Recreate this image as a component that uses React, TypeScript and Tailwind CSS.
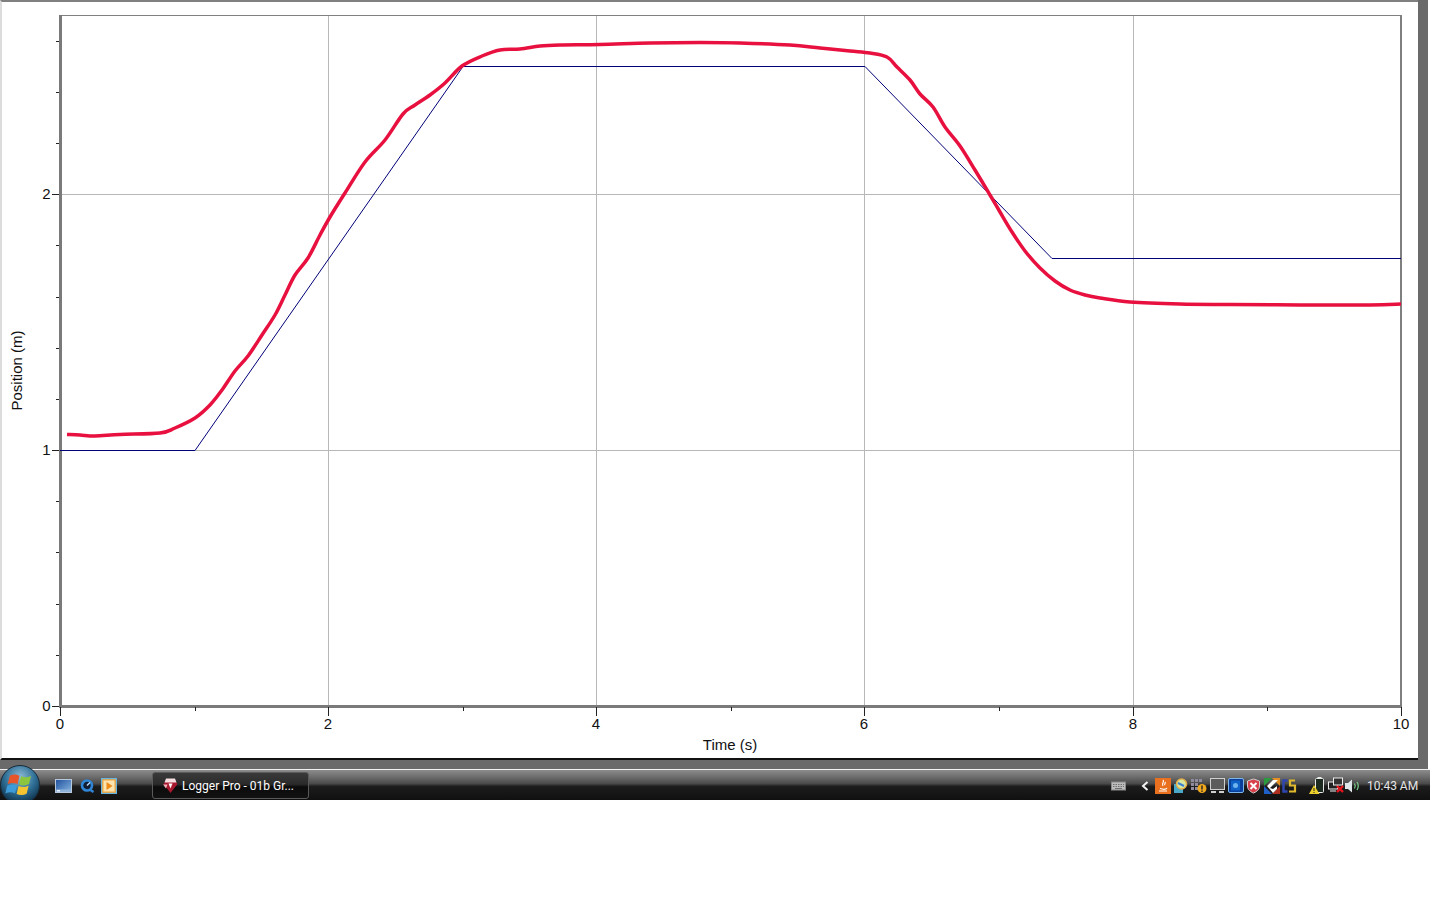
const redPts: [number, number][] = [[67,434.5],[80,435],[95,436],[120,434.5],[160,433],[175,428],[195,418],[210,405],[222,390],[235,371],[248,356],[262,335],[275,315],[285,295],[295,275],[308,258],[320,235],[330,217],[345,193],[365,162],[385,140],[403,114],[415,105],[430,95],[445,83],[462,66],[482,56],[500,50],[520,49],[540,46],[560,45],[600,44.5],[650,43],[700,42.5],[740,43],[790,45],[820,48],[850,51],[870,53],[887,57],[897,67],[910,80],[920,94],[933,107],[945,127],[960,146],[975,170],[990,195],[1000,212],[1012,232],[1025,251],[1040,268],[1055,281],[1070,290],[1085,295],[1100,298],[1130,302],[1180,304],[1230,304.5],[1300,305],[1370,305],[1401,304]];

function smooth(p: [number, number][]) {
  let d = `M${p[0][0]} ${p[0][1]}`;
  for (let i = 0; i < p.length - 1; i++) {
    const a = p[Math.max(i - 1, 0)];
    const b = p[i];
    const c = p[i + 1];
    const e = p[Math.min(i + 2, p.length - 1)];
    d += `C${b[0] + (c[0] - a[0]) / 6} ${b[1] + (c[1] - a[1]) / 6} ${c[0] - (e[0] - b[0]) / 6} ${c[1] - (e[1] - b[1]) / 6} ${c[0]} ${c[1]}`;
  }
  return d;
}

const blue = "60,450.5 195,450.5 463,66.5 865,66.5 1052,258.5 1401,258.5";

const xMajor = [
  { x: 60, l: "0" },
  { x: 328, l: "2" },
  { x: 596, l: "4" },
  { x: 864, l: "6" },
  { x: 1133, l: "8" },
  { x: 1401, l: "10" },
];
const xMinor = [195, 463, 731, 999, 1267];
const yMajor = [
  { y: 706, l: "0" },
  { y: 450, l: "1" },
  { y: 194, l: "2" },
];
const yMinor = [655, 604, 552, 501, 399, 348, 297, 245, 143, 92, 41];

function Chart() {
  return (
    <svg width="1416" height="756" viewBox="2 2 1416 756" className="block" style={{ fontFamily: '"Liberation Sans", Arial, sans-serif' }}>
      <g shapeRendering="crispEdges">
        {xMajor.slice(1, 5).map((t) => (
          <line key={t.x} x1={t.x + 0.5} x2={t.x + 0.5} y1="15" y2="706" stroke="#b8b8b8" />
        ))}
        {yMajor.slice(1).map((t) => (
          <line key={t.y} x1="60" x2="1401" y1={t.y + 0.5} y2={t.y + 0.5} stroke="#b8b8b8" />
        ))}
        <line x1="60" x2="1402" y1="15.5" y2="15.5" stroke="#808080" />
        <line x1="1401" x2="1401" y1="15" y2="707" stroke="#808080" strokeWidth="2" />
        <line x1="60" x2="60" y1="15" y2="708" stroke="#7a7a7a" strokeWidth="3" />
        <line x1="60" x2="1402" y1="706" y2="706" stroke="#7a7a7a" strokeWidth="3" />
        {xMajor.map((t) => (
          <line key={t.x} x1={t.x + 0.5} x2={t.x + 0.5} y1="707" y2="716" stroke="#222" />
        ))}
        {xMinor.map((x) => (
          <line key={x} x1={x + 0.5} x2={x + 0.5} y1="707" y2="711" stroke="#222" />
        ))}
        {yMajor.map((t) => (
          <line key={t.y} x1="52" x2="59" y1={t.y + 0.5} y2={t.y + 0.5} stroke="#222" />
        ))}
        {yMinor.map((y) => (
          <line key={y} x1="56" x2="59" y1={y + 0.5} y2={y + 0.5} stroke="#222" />
        ))}
      </g>
      <polyline points={blue} fill="none" stroke="#000078" strokeWidth="1" />
      <path d={smooth(redPts)} fill="none" stroke="#e8103f" strokeWidth="3.5" strokeLinejoin="round" />
      {xMajor.map((t) => (
        <text key={t.x} x={t.x} y="729" textAnchor="middle" fontSize="15" fill="#111">{t.l}</text>
      ))}
      {yMajor.map((t) => (
        <text key={t.y} x="50.5" y={t.y + 5} textAnchor="end" fontSize="15" fill="#111">{t.l}</text>
      ))}
      <text x="730" y="750" textAnchor="middle" fontSize="15" fill="#111">Time (s)</text>
      <text transform="translate(21.500 370.500) rotate(-90)" textAnchor="middle" fontSize="15" fill="#111">Position (m)</text>
    </svg>
  );
}

function StartOrb() {
  return (
    <svg width="42" height="36" viewBox="0 0 42 36" className="-mt-[6px] block shrink-0 self-end">
      <defs>
        <radialGradient id="orb" cx="50%" cy="30%" r="70%">
          <stop offset="0" stopColor="#8fbcd6" />
          <stop offset="0.55" stopColor="#2f6f96" />
          <stop offset="1" stopColor="#0c2c44" />
        </radialGradient>
      </defs>
      <circle cx="20" cy="21" r="19.500" fill="url(#orb)" stroke="#1a2a36" strokeWidth="1" />
      <path d="M10 11.500c3.500-1.500 6-1.500 9.500.2l-2 8.300c-3.500-1.500-6.200-1.500-9.800 0z" fill="#e8552a" />
      <path d="M21 12.200c3.500 1.500 6.200 1.500 10-.3l-2 8.200c-3.500 1.700-6.300 1.700-10 .3z" fill="#8cc63f" />
      <path d="M7.300 21.500c3.500-1.500 6.200-1.500 9.800 0l-2 7.800c-3.500-1.400-6.300-1.400-9.800.2z" fill="#3d9bd9" />
      <path d="M18.600 22c3.500 1.400 6.300 1.400 10-.3l-2 8c-3.500 1.600-6.300 1.600-10 .3z" fill="#f7c431" />
    </svg>
  );
}

function Quick() {
  return (
    <div className="ml-[13px] flex items-center pt-[1px]">
      <svg width="17" height="14" viewBox="0 0 17 14" className="block">
        <defs>
          <linearGradient id="desk" x1="0" y1="0" x2="1" y2="1">
            <stop offset="0" stopColor="#1d4f9c" />
            <stop offset="1" stopColor="#8ab8e4" />
          </linearGradient>
        </defs>
        <rect x="0.500" y="0.500" width="16" height="13" fill="url(#desk)" stroke="#b9c9dc" />
        <rect x="1" y="10.500" width="15" height="2.500" fill="#8fb3d8" />
        <rect x="2" y="11" width="3" height="1.500" fill="#eef" />
      </svg>
      <svg width="15" height="16" viewBox="0 0 15 16" className="ml-[8px] block">
        <circle cx="7" cy="7.500" r="5" fill="#111d33" stroke="#2f86d6" strokeWidth="2.600" />
        <path d="M7 7.500l3-3" stroke="#bfe0ff" strokeWidth="1.400" />
        <path d="M10.500 12l3 2" stroke="#2f86d6" strokeWidth="2.400" />
      </svg>
      <svg width="16" height="16" viewBox="0 0 16 16" className="ml-[6px] block">
        <rect x="0.500" y="0.500" width="15" height="15" fill="#f2a63a" stroke="#67b4e0" strokeWidth="1.400" />
        <rect x="2.500" y="2.500" width="11" height="11" fill="#fbe4b0" />
        <path d="M5.500 4l6 4-6 4z" fill="#ef8a17" />
      </svg>
    </div>
  );
}

function TaskButton() {
  return (
    <div className="ml-[35px] mt-[1px] flex h-[27px] w-[157px] items-center rounded-[3px] border border-[#5a5a5a] bg-[linear-gradient(#3a3a3a,#2a2a2a_45%,#0c0c0c_55%,#111)] pl-[9px]">
      <svg width="17" height="17" viewBox="0 0 17 17" className="block shrink-0">
        <path d="M1.500 7l7 9 7-9-2-2.500h-10z" fill="#a8182e" />
        <path d="M1 7.500c1 1 1.500 2 3 4l1.500-4z" fill="#f0b0b8" />
        <path d="M4 1.500h9l1.500 4h-12z" fill="#f6e0e2" />
        <path d="M6.500 6.500h4l-2 5z" fill="#fff" />
      </svg>
      <span className="ml-[3px] whitespace-nowrap text-[12px] leading-none text-white" style={{ fontFamily: 'Roboto, "Noto Sans", sans-serif' }}>
        Logger Pro - 01b Gr...
      </span>
    </div>
  );
}

function Tray() {
  return (
    <div className="ml-auto flex items-center pt-[1px]">
      <svg width="16" height="10" viewBox="0 0 16 10" className="mt-[1px] block">
        <rect x="0.500" y="1" width="14" height="8" fill="#bcbcbc" stroke="#8a8a8a" />
        <path d="M2 3.500h11M2 5.500h11" stroke="#6e6e6e" strokeDasharray="1.500 1" />
        <path d="M4 7.500h7" stroke="#6e6e6e" />
      </svg>
      <svg width="8" height="10" viewBox="0 0 8 10" className="ml-[14px] block">
        <path d="M6.500 1L2 5l4.500 4" fill="none" stroke="#f2f2f2" strokeWidth="2" />
      </svg>
      <svg width="16" height="16" viewBox="0 0 16 16" className="ml-[6px] block">
        <rect width="16" height="16" fill="#e8701f" />
        <path d="M5 10.500c3 1 6 1 7-.5M4 13h8" stroke="#fff" strokeWidth="1.200" fill="none" />
        <path d="M8 2c2 2-2 3 0 6M10 4c1 1-1 2 0 3" stroke="#fff" strokeWidth="1.200" fill="none" />
      </svg>
      <svg width="16" height="16" viewBox="0 0 16 16" className="ml-[2px] block">
        <rect x="1" y="6" width="9" height="9" fill="#4aa8c8" />
        <circle cx="8.500" cy="6" r="5" fill="#d9e8a0" stroke="#e2b04a" strokeWidth="1.500" />
        <path d="M5 5l6 3" stroke="#3c7fd0" strokeWidth="2" />
      </svg>
      <svg width="17" height="16" viewBox="0 0 17 16" className="ml-[1px] block">
        <g fill="#8f8a9c">
          <rect x="1" y="1" width="3" height="3" /><rect x="5" y="1" width="3" height="3" /><rect x="9" y="1" width="3" height="3" />
          <rect x="1" y="5" width="3" height="3" /><rect x="5" y="5" width="3" height="3" /><rect x="1" y="9" width="3" height="3" /><rect x="5" y="9" width="3" height="3" />
        </g>
        <circle cx="12" cy="10.500" r="4.500" fill="#f0a81e" />
        <rect x="11.300" y="7.500" width="1.400" height="4" fill="#222" />
        <rect x="11.300" y="12.500" width="1.400" height="1.400" fill="#222" />
      </svg>
      <svg width="15" height="16" viewBox="0 0 15 16" className="ml-[3px] block">
        <rect x="0.500" y="0.500" width="14" height="11" fill="#5c5c5c" stroke="#cfcfcf" />
        <rect x="1" y="13" width="5" height="2" fill="#cfcfcf" />
        <rect x="9" y="13" width="5" height="2" fill="#cfcfcf" />
      </svg>
      <svg width="16" height="16" viewBox="0 0 16 16" className="ml-[3px] block">
        <rect x="0.500" y="0.500" width="15" height="14" rx="1.500" fill="#0a3f9c" stroke="#7fb6ea" />
        <rect x="3" y="2.500" width="9" height="10" fill="#0f62c8" />
        <circle cx="7.500" cy="7.500" r="2.500" fill="#6fb4ee" />
      </svg>
      <svg width="15" height="16" viewBox="0 0 15 16" className="ml-[2px] block">
        <path d="M7.500 1l6 2v5c0 3.500-3 6-6 7-3-1-6-3.500-6-7V3z" fill="#d8404a" stroke="#d0d0d0" />
        <path d="M4.500 5l6 6M10.500 5l-6 6" stroke="#fff" strokeWidth="2" />
      </svg>
      <svg width="16" height="16" viewBox="0 0 16 16" className="ml-[3px] block">
        <path d="M0 0h8L0 8z" fill="#2a9a3e" />
        <path d="M8 0h8v8z" fill="#e8901f" />
        <path d="M0 8l8 8H0z" fill="#1e5fc8" />
        <path d="M16 8v8H8z" fill="#b03020" />
        <path d="M3 8l6-6h5L6 10l3 1 4-3v3l-4 4z" fill="#fff" />
      </svg>
      <svg width="16" height="16" viewBox="0 0 16 16" className="ml-[1px] block">
        <path d="M6.500 2.500H2.500v11h4" fill="none" stroke="#2f46b0" strokeWidth="2.500" />
        <path d="M14 2.500H9v5h5v6H8" fill="none" stroke="#e0b92c" strokeWidth="2.200" />
      </svg>
      <svg width="16" height="18" viewBox="0 0 16 18" className="ml-[12px] block">
        <rect x="6.500" y="1.500" width="8" height="14" rx="1" fill="#1c2a20" stroke="#e8e8e8" />
        <rect x="8.500" y="0" width="4" height="2" fill="#e8e8e8" />
        <path d="M5 8l5.500 9H0z" fill="#f0d02a" />
        <rect x="4.500" y="11" width="1" height="3" fill="#222" />
        <rect x="4.500" y="15" width="1" height="1" fill="#222" />
      </svg>
      <svg width="17" height="17" viewBox="0 0 17 17" className="ml-[3px] block">
        <rect x="0.500" y="5" width="9" height="7" fill="#222" stroke="#eee" />
        <rect x="5.500" y="1" width="9" height="7" fill="#333" stroke="#eee" />
        <path d="M2 14h6" stroke="#eee" />
        <path d="M9 9l6 6M15 9l-6 6" stroke="#e8141c" strokeWidth="2.400" />
      </svg>
      <svg width="16" height="14" viewBox="0 0 16 14" className="block">
        <path d="M0 4h3l4-3.500v13L3 10H0z" fill="#dfe6ea" />
        <path d="M9.500 4.500q1.500 2.500 0 5M12 3q2.500 4 0 8" fill="none" stroke="#7fd08a" strokeWidth="1.200" />
      </svg>
      <span className="ml-[6px] mr-[13px] w-[50px] whitespace-nowrap text-[12px] leading-none text-[#e6e6e6]" style={{ fontFamily: 'Roboto, "Noto Sans", sans-serif' }}>
        10:43 AM
      </span>
    </div>
  );
}

export default function App() {
  return (
    <div className="h-[900px] w-[1440px] bg-white">
      <div className="flex h-[800px] w-[1430px] flex-col">
        <div className="flex h-[769px] w-[1428px] flex-col bg-[#6a6a6a]">
          <div className="box-border h-[760px] w-[1418px] border-t-2 border-b-2 border-l-2 border-t-[#808080] border-b-[#111] border-l-[#dcdcdc] bg-white">
            <Chart />
          </div>
        </div>
        <div className="flex h-[31px] items-center border-t border-t-[#f0f0f0] bg-[linear-gradient(#8c8c8c,#6a6a6a_25%,#4a4a4a_45%,#1c1c1c_55%,#101010)]">
          <StartOrb />
          <Quick />
          <TaskButton />
          <Tray />
        </div>
      </div>
    </div>
  );
}
